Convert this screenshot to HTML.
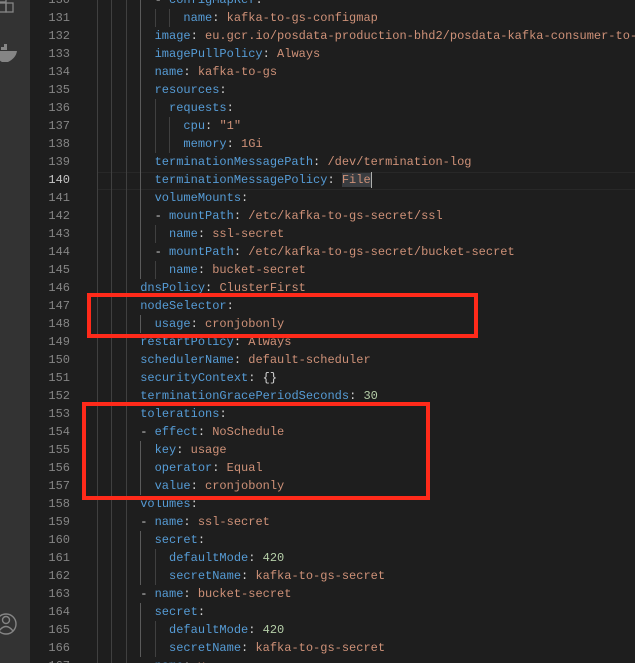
<!DOCTYPE html>
<html><head><meta charset="utf-8"><style>
html,body{margin:0;padding:0;background:#1e1e1e;width:635px;height:663px;overflow:hidden;position:relative}
#wrap{position:absolute;left:0;top:0;width:635px;height:663px;overflow:hidden}
#ab{position:absolute;left:0;top:0;width:30px;height:663px;background:#333333}
.ln{position:absolute;left:30px;width:40px;text-align:right;font:12px "Liberation Mono",monospace;color:#858585;height:18px;line-height:18px}
.cl{position:absolute;left:97px;font:12px "Liberation Mono",monospace;white-space:pre;color:#d4d4d4;height:18px;line-height:18px}
.k{color:#569cd6}.s{color:#ce9178}.n{color:#b5cea8}
.g{position:absolute;width:1px;height:18px;background:#404040}
.box{position:absolute;border:4px solid #ff2a1a;box-sizing:border-box}
</style></head><body><div id="wrap">
<div id="ab">
<svg width="30" height="663" style="position:absolute;left:0;top:0">
<g fill="none" stroke="#858585" stroke-width="1.3"><rect x="-2" y="-6" width="8" height="8"/><rect x="-2" y="3" width="8" height="9"/><rect x="6" y="3" width="7" height="9"/></g>
<path d="M-2 51 H17 Q16 58 8 62 H2 Q-2 60 -2 55Z" fill="#858585"/>
<rect x="1" y="47" width="3" height="3" fill="#858585"/><rect x="4" y="47" width="3" height="3" fill="#858585"/><rect x="4" y="44" width="3" height="3" fill="#858585"/>
<circle cx="6" cy="624" r="10" fill="none" stroke="#858585" stroke-width="1.4"/>
<circle cx="6" cy="620" r="3.5" fill="none" stroke="#858585" stroke-width="1.4"/>
<path d="M-1 631 Q6 622 13 631" fill="none" stroke="#858585" stroke-width="1.4"/>
</svg></div>
<div style="position:absolute;left:97px;top:172px;width:538px;height:16px;border-top:1px solid #282828;border-bottom:1px solid #282828"></div>
<div id="ed"></div>
<div class="box" style="left:87px;top:293px;width:391px;height:45px"></div>
<div class="box" style="left:82px;top:402px;width:348px;height:98px"></div>
</div>
<script>
var L=[
"        - <k>configMapRef</k>:",
"            <k>name</k>: <s>kafka-to-gs-configmap</s>",
"        <k>image</k>: <s>eu.gcr.io/posdata-production-bhd2/posdata-kafka-consumer-to-gs</s>",
"        <k>imagePullPolicy</k>: <s>Always</s>",
"        <k>name</k>: <s>kafka-to-gs</s>",
"        <k>resources</k>:",
"          <k>requests</k>:",
"            <k>cpu</k>: <s>\"1\"</s>",
"            <k>memory</k>: <s>1Gi</s>",
"        <k>terminationMessagePath</k>: <s>/dev/termination-log</s>",
"        <k>terminationMessagePolicy</k>: <sel>File</sel>",
"        <k>volumeMounts</k>:",
"        - <k>mountPath</k>: <s>/etc/kafka-to-gs-secret/ssl</s>",
"          <k>name</k>: <s>ssl-secret</s>",
"        - <k>mountPath</k>: <s>/etc/kafka-to-gs-secret/bucket-secret</s>",
"          <k>name</k>: <s>bucket-secret</s>",
"      <k>dnsPolicy</k>: <s>ClusterFirst</s>",
"      <k>nodeSelector</k>:",
"        <k>usage</k>: <s>cronjobonly</s>",
"      <k>restartPolicy</k>: <s>Always</s>",
"      <k>schedulerName</k>: <s>default-scheduler</s>",
"      <k>securityContext</k>: {}",
"      <k>terminationGracePeriodSeconds</k>: <n>30</n>",
"      <k>tolerations</k>:",
"      - <k>effect</k>: <s>NoSchedule</s>",
"        <k>key</k>: <s>usage</s>",
"        <k>operator</k>: <s>Equal</s>",
"        <k>value</k>: <s>cronjobonly</s>",
"      <k>volumes</k>:",
"      - <k>name</k>: <s>ssl-secret</s>",
"        <k>secret</k>:",
"          <k>defaultMode</k>: <n>420</n>",
"          <k>secretName</k>: <s>kafka-to-gs-secret</s>",
"      - <k>name</k>: <s>bucket-secret</s>",
"        <k>secret</k>:",
"          <k>defaultMode</k>: <n>420</n>",
"          <k>secretName</k>: <s>kafka-to-gs-secret</s>",
"      - <k>name</k>: <s>x</s>"
];
var h="",cw=7.2;
L.forEach(function(t,i){
 var top=-9+i*18,num=130+i;
 var n=t.match(/^ */)[0].length;
 for(var c=0;c<n;c+=2){h+='<div class="g" style="left:'+Math.round(97+c*cw)+'px;top:'+top+'px;'+(c==6?'background:#5a5a5a':'')+'"></div>';}
 var x=t.replace(/<k>/g,'<span class="k">').replace(/<\/k>/g,'</span>').replace(/<s>/g,'<span class="s">').replace(/<\/s>/g,'</span>').replace(/<n>/g,'<span class="n">').replace(/<\/n>/g,'</span>').replace(/<sel>/g,'<span class="s" style="background:#3a3d41">').replace(/<\/sel>/g,'</span>');
 h+='<div class="ln" style="top:'+top+'px;'+(num==140?'color:#c6c6c6':'')+'">'+num+'</div>';
 h+='<div class="cl" style="top:'+top+'px">'+x+'</div>';
});
h+='<div style="position:absolute;left:371px;top:172px;width:1px;height:16px;background:#aeafad"></div>';
document.getElementById('ed').innerHTML=h;
</script>
</body></html>
